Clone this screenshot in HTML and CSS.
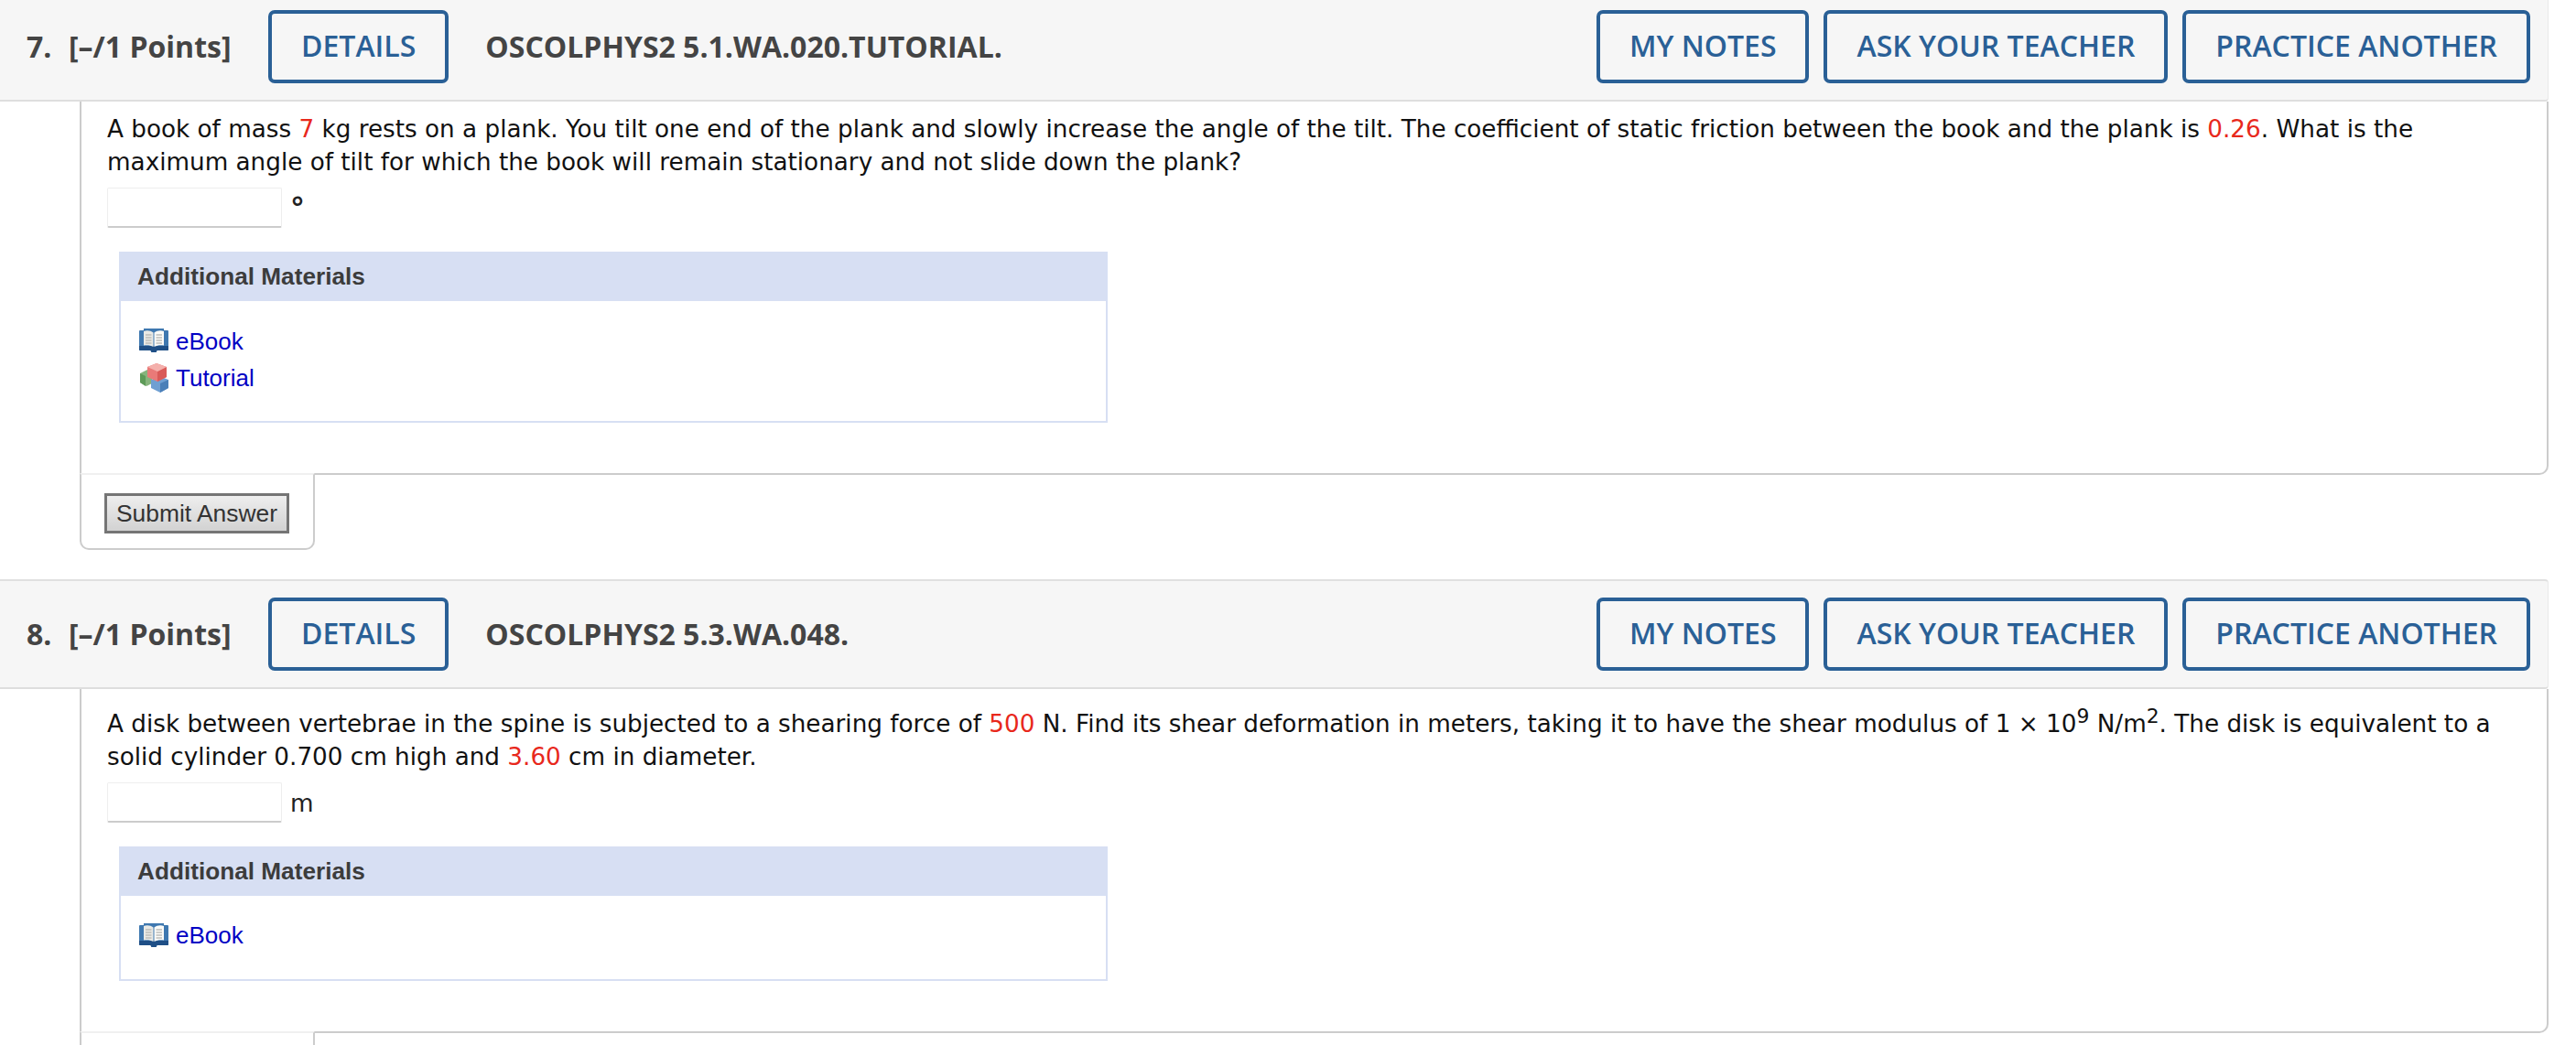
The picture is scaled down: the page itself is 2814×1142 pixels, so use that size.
FILE: index.html
```html
<!DOCTYPE html>
<html lang="en">
<head>
<meta charset="utf-8">
<title>Assignment questions</title>
<link rel="stylesheet" href="styles.css">
</head>
<body>
<main class="page">

<section class="question">
  <header class="q-head">
    <span class="q-num">7.</span>
    <span class="q-points">[–/1 Points]</span>
    <button class="btn btn-details">DETAILS</button>
    <span class="q-code">OSCOLPHYS2 5.1.WA.020.TUTORIAL.</span>
    <div class="q-actions">
      <button class="btn">MY NOTES</button>
      <button class="btn">ASK YOUR TEACHER</button>
      <button class="btn">PRACTICE ANOTHER</button>
    </div>
  </header>
  <div class="q-body">
    <p class="q-text">A book of mass <span class="num">7</span> kg rests on a plank. You tilt one end of the plank and slowly increase the angle of the tilt. The coefficient of static friction between the book and the plank is <span class="num">0.26</span>. What is the maximum angle of tilt for which the book will remain stationary and not slide down the plank?</p>
    <div class="answer"><input class="answer-input" type="text" aria-label="Answer"><span class="unit unit-deg">°</span></div>
    <div class="materials">
      <h3 class="materials-title">Additional Materials</h3>
      <ul class="materials-list">
        <li><svg class="icon icon-book" viewBox="0 0 32 27"><path fill="#3f78b0" d="M1 3h4V1h22v2h4a1 1 0 0 1 1 1V24a1 1 0 0 1-1 1H19.500l-1 2h-5l-1-2H1a1 1 0 0 1-1-1V4a1 1 0 0 1 1-1z"/><path fill="#1f4f86" d="M0 20h32v4a1 1 0 0 1-1 1H19.500l-1 2h-5l-1-2H1a1 1 0 0 1-1-1z"/><path fill="#e9e9e5" d="M5 4c3.500-1.200 7.500-.8 10.500 1.500v15.500c-3-1.800-7-2.200-10.500-1.500z"/><path fill="#fbfbf8" d="M27 4c-3.500-1.200-7.500-.8-10.500 1.500v15.500c3-1.800 7-2.200 10.500-1.500z"/><path stroke="#bdbdb9" stroke-width="1.500" fill="none" d="M7 8h6.500M7 11h6.500M7 14h6.500M7 17h6.500M18.500 8h6.500M18.500 11h6.500M18.500 14h6.500M18.500 17h6.500"/></svg><a class="link" href="#">eBook</a></li>
        <li><svg class="icon icon-cubes" viewBox="0 0 32 32"><path fill="#86b47c" d="M1 11l8-4 5 3v12l-6 3-7-4z"/><path fill="#5d9a58" d="M1 11l6 3v11l-6-4z"/><path fill="#6f9fd2" d="M13 18l9-4 10 4v9l-9 5-10-5z"/><path fill="#4a7fb8" d="M23 22l9-4v9l-9 5z"/><path fill="#e97a78" d="M9 4l10-4 11 4v11l-10 5-11-5z"/><path fill="#d95a58" d="M20 9l10-5v11l-10 5z"/><path fill="#f4b0ac" d="M9 4l10-4 11 4-10 5z"/></svg><a class="link" href="#">Tutorial</a></li>
      </ul>
    </div>
  </div>
  <div class="q-submit"><button class="submit">Submit Answer</button></div>
</section>

<section class="question">
  <header class="q-head">
    <span class="q-num">8.</span>
    <span class="q-points">[–/1 Points]</span>
    <button class="btn btn-details">DETAILS</button>
    <span class="q-code">OSCOLPHYS2 5.3.WA.048.</span>
    <div class="q-actions">
      <button class="btn">MY NOTES</button>
      <button class="btn">ASK YOUR TEACHER</button>
      <button class="btn">PRACTICE ANOTHER</button>
    </div>
  </header>
  <div class="q-body">
    <p class="q-text">A disk between vertebrae in the spine is subjected to a shearing force of <span class="num">500</span> N. Find its shear deformation in meters, taking it to have the shear modulus of 1 × 10<sup>9</sup> N/m<sup>2</sup>. The disk is equivalent to a solid cylinder 0.700 cm high and <span class="num">3.60</span> cm in diameter.</p>
    <div class="answer"><input class="answer-input" type="text" aria-label="Answer"><span class="unit">m</span></div>
    <div class="materials">
      <h3 class="materials-title">Additional Materials</h3>
      <ul class="materials-list">
        <li><svg class="icon icon-book" viewBox="0 0 32 27"><path fill="#3f78b0" d="M1 3h4V1h22v2h4a1 1 0 0 1 1 1V24a1 1 0 0 1-1 1H19.500l-1 2h-5l-1-2H1a1 1 0 0 1-1-1V4a1 1 0 0 1 1-1z"/><path fill="#1f4f86" d="M0 20h32v4a1 1 0 0 1-1 1H19.500l-1 2h-5l-1-2H1a1 1 0 0 1-1-1z"/><path fill="#e9e9e5" d="M5 4c3.500-1.200 7.500-.8 10.500 1.500v15.500c-3-1.800-7-2.200-10.500-1.500z"/><path fill="#fbfbf8" d="M27 4c-3.500-1.200-7.500-.8-10.500 1.500v15.500c3-1.800 7-2.200 10.500-1.500z"/><path stroke="#bdbdb9" stroke-width="1.500" fill="none" d="M7 8h6.500M7 11h6.500M7 14h6.500M7 17h6.500M18.500 8h6.500M18.500 11h6.500M18.500 14h6.500M18.500 17h6.500"/></svg><a class="link" href="#">eBook</a></li>
      </ul>
    </div>
  </div>
  <div class="q-submit"></div>
</section>

</main>
</body>
</html>
```
FILE: styles.css
```css
html, body {
  margin: 0;
  padding: 0;
  height: 100%;
  overflow: hidden;
  background: #fff;
}

.page {
  width: 2784px;
  margin-top: -9px;
}

.question {
  margin-bottom: 32px;
}

.q-head {
  display: flex;
  align-items: center;
  height: 120px;
  box-sizing: border-box;
  padding: 0 19px 0 29px;
  background: #f6f6f6;
  border-top: 2px solid #e0e0e0;
  border-right: 1px solid #e8e8e8;
  border-bottom: 2px solid #dedede;
  border-radius: 0 4px 4px 0;
  font-family: "Open Sans", sans-serif;
  font-size: 32px;
  font-weight: 700;
  color: #444;
}

.q-num,
.q-points,
.q-code {
  padding-bottom: 2px;
}

.q-num {
  width: 46px;
}

.q-points {
  width: 218px;
}

.q-code {
  margin-left: 40px;
  white-space: nowrap;
}

.q-actions {
  display: flex;
  gap: 16px;
  margin-left: auto;
}

.btn {
  height: 80px;
  box-sizing: border-box;
  padding: 0 32px 4px;
  background: #f6f6f6;
  border: 4px solid #2a6096;
  border-radius: 7px;
  font-family: "Open Sans", sans-serif;
  font-size: 32px;
  font-weight: 600;
  color: #2a6096;
  white-space: nowrap;
}

.q-body {
  margin-left: 87px;
  padding: 1px 0 55px 28px;
  background: #fff;
  border-left: 2px solid #ccc;
  border-right: 2px solid #ccc;
  border-bottom: 2px solid #ccc;
  border-radius: 0 0 10px 0;
}

.q-text {
  margin: 0 0 10px;
  padding: 11px 40px 0 0;
  font-family: "DejaVu Sans", sans-serif;
  font-size: 26.24px;
  line-height: 36px;
  color: #111;
}

.num {
  color: #e8281c;
}

.answer {
  display: flex;
  align-items: center;
  height: 44px;
}

.answer-input {
  width: 191px;
  height: 44px;
  box-sizing: border-box;
  margin: 0;
  background: #fff;
  border: 1px solid #eee;
  border-bottom: 2px solid #ccc;
  border-radius: 2px;
}

.unit {
  margin: 2px 0 0 9px;
  font-family: "DejaVu Sans", sans-serif;
  font-size: 26.24px;
  color: #222;
}

.unit-deg {
  font-size: 32px;
  font-weight: 700;
  line-height: 32px;
  margin-top: 2px;
}

.materials {
  width: 1080px;
  box-sizing: border-box;
  margin: 26px 0 0 13px;
  border: 2px solid #d7dff3;
  border-top: 0;
}

.materials-title {
  margin: 0 -2px;
  height: 54px;
  padding-left: 20px;
  background: #d7dff3;
  font: bold 26.2px/54px "Liberation Sans", sans-serif;
  color: #3c3c3c;
}

.materials-list {
  list-style: none;
  margin: 0;
  padding: 24px 0 27px 20px;
}

.materials-list li {
  display: flex;
  align-items: center;
  height: 40px;
}

.icon {
  width: 32px;
  margin-right: 8px;
  flex: none;
}

.icon-book {
  height: 27px;
  margin-bottom: 3px;
}

.icon-cubes {
  height: 32px;
}

.link {
  font: 26px "Liberation Sans", sans-serif;
  color: #0000c4;
  text-decoration: none;
}

.q-submit {
  width: 257px;
  min-height: 84px;
  box-sizing: border-box;
  margin: -2px 0 0 87px;
  padding: 20px 0 0 25px;
  background: #fff;
  border: 2px solid #ccc;
  border-top-color: #f0f0f0;
  border-radius: 0 0 10px 10px;
  position: relative;
}

.submit {
  display: block;
  width: 202px;
  height: 44px;
  padding: 0;
  background: linear-gradient(#eeeeee, #d2d2d2);
  border: 3px solid #757575;
  font: 26.4px "Liberation Sans", sans-serif;
  color: #333;
}
```
